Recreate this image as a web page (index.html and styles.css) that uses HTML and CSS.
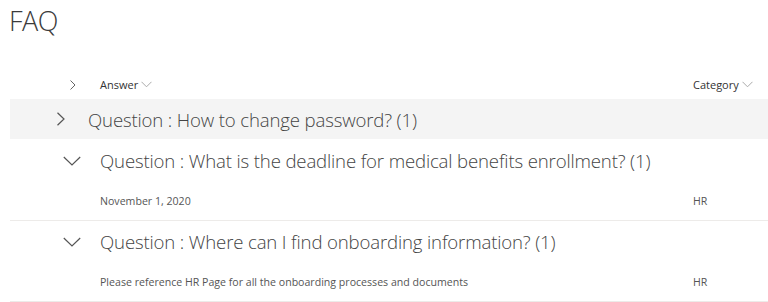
FILE: index.html
```html
<!DOCTYPE html>
<html>
<head>
<meta charset="utf-8">
<link rel="stylesheet" href="styles.css">
</head>
<body>
<h1 class="title">FAQ</h1>
<div class="list">
  <div class="head-row">
    <span class="head-chev"><svg width="8" height="10" viewBox="0 0 8 10"><path d="M1.5 0.5 L6 5 L1.5 9.5" fill="none" stroke="#666" stroke-width="1"/></svg></span>
    <span class="col-answer">Answer <svg class="sort" width="11" height="7" viewBox="0 0 11 7"><path d="M0.5 0.8 L5.5 5.8 L10.5 0.8" fill="none" stroke="#aaa" stroke-width="1"/></svg></span>
    <span class="col-cat">Category <svg class="sort" width="11" height="7" viewBox="0 0 11 7"><path d="M0.5 0.8 L5.5 5.8 L10.5 0.8" fill="none" stroke="#aaa" stroke-width="1"/></svg></span>
  </div>

  <div class="group collapsed">
    <div class="group-head">
      <span class="g-chev"><svg width="10" height="14" viewBox="0 0 10 14"><path d="M1.5 0.8 L8 7 L1.5 13.2" fill="none" stroke="#555" stroke-width="1.2"/></svg></span>
      <span class="g-title">Question : How to change password? (1)</span>
    </div>
  </div>

  <div class="group">
    <div class="group-head">
      <span class="g-chev wide"><svg width="18" height="10" viewBox="0 0 18 10"><path d="M0.8 1 L9 9 L17.2 1" fill="none" stroke="#555" stroke-width="1.2"/></svg></span>
      <span class="g-title">Question : What is the deadline for medical benefits enrollment? (1)</span>
    </div>
    <div class="row">
      <span class="cell-answer">November 1, 2020</span>
      <span class="cell-cat">HR</span>
    </div>
  </div>

  <div class="group">
    <div class="group-head">
      <span class="g-chev wide"><svg width="18" height="10" viewBox="0 0 18 10"><path d="M0.8 1 L9 9 L17.2 1" fill="none" stroke="#555" stroke-width="1.2"/></svg></span>
      <span class="g-title">Question : Where can I find onboarding information? (1)</span>
    </div>
    <div class="row">
      <span class="cell-answer">Please reference HR Page for all the onboarding processes and documents</span>
      <span class="cell-cat">HR</span>
    </div>
  </div>
</div>
</body>
</html>
```

FILE: styles.css
```css
* { box-sizing: border-box; }
html, body {
  margin: 0;
  padding: 0;
  background: #fff;
  font-family: "Open Sans", "Noto Sans", sans-serif;
  color: #333;
  overflow: hidden;
}
.title {
  margin: 0;
  padding: 3px 0 0 9px;
  height: 70px;
  font-size: 27px;
  font-weight: 300;
  color: #3b3b3b;
  line-height: 36px;
  letter-spacing: -0.5px;
}
.list {
  padding-left: 10px;
}
.head-row {
  display: flex;
  align-items: center;
  height: 29px;
  font-size: 11px;
  color: #333;
}
.head-chev {
  display: flex;
  flex: none;
  margin-left: 59px;
  width: 31px;
}
.head-chev svg { display: block; flex: none; }
.col-answer {
  flex: none;
  width: 593px;
  display: flex;
  align-items: center;
  gap: 3px;
}
.col-cat {
  display: flex;
  align-items: center;
  gap: 3px;
}
.sort { display: block; flex: none; }
.group-head {
  display: flex;
  align-items: center;
  height: 41px;
  font-size: 18.6px;
  font-weight: 300;
  color: #444;
}
.collapsed .group-head {
  background: #f4f4f4;
  height: 40px;
  margin-bottom: 1px;
}
.g-chev {
  display: flex;
  flex: none;
  margin-left: 46px;
  width: 32px;
}
.g-chev.wide {
  margin-left: 53px;
  width: 37px;
}
.g-chev svg { display: block; flex: none; }
.g-title {
  white-space: nowrap;
  letter-spacing: -0.15px;
}
.row {
  display: flex;
  align-items: center;
  height: 40px;
  border-bottom: 1px solid #edebe9;
  font-size: 10.6px;
  color: #555;
  padding-left: 90px;
}
.cell-answer {
  flex: none;
  width: 593px;
  white-space: nowrap;
}
```
